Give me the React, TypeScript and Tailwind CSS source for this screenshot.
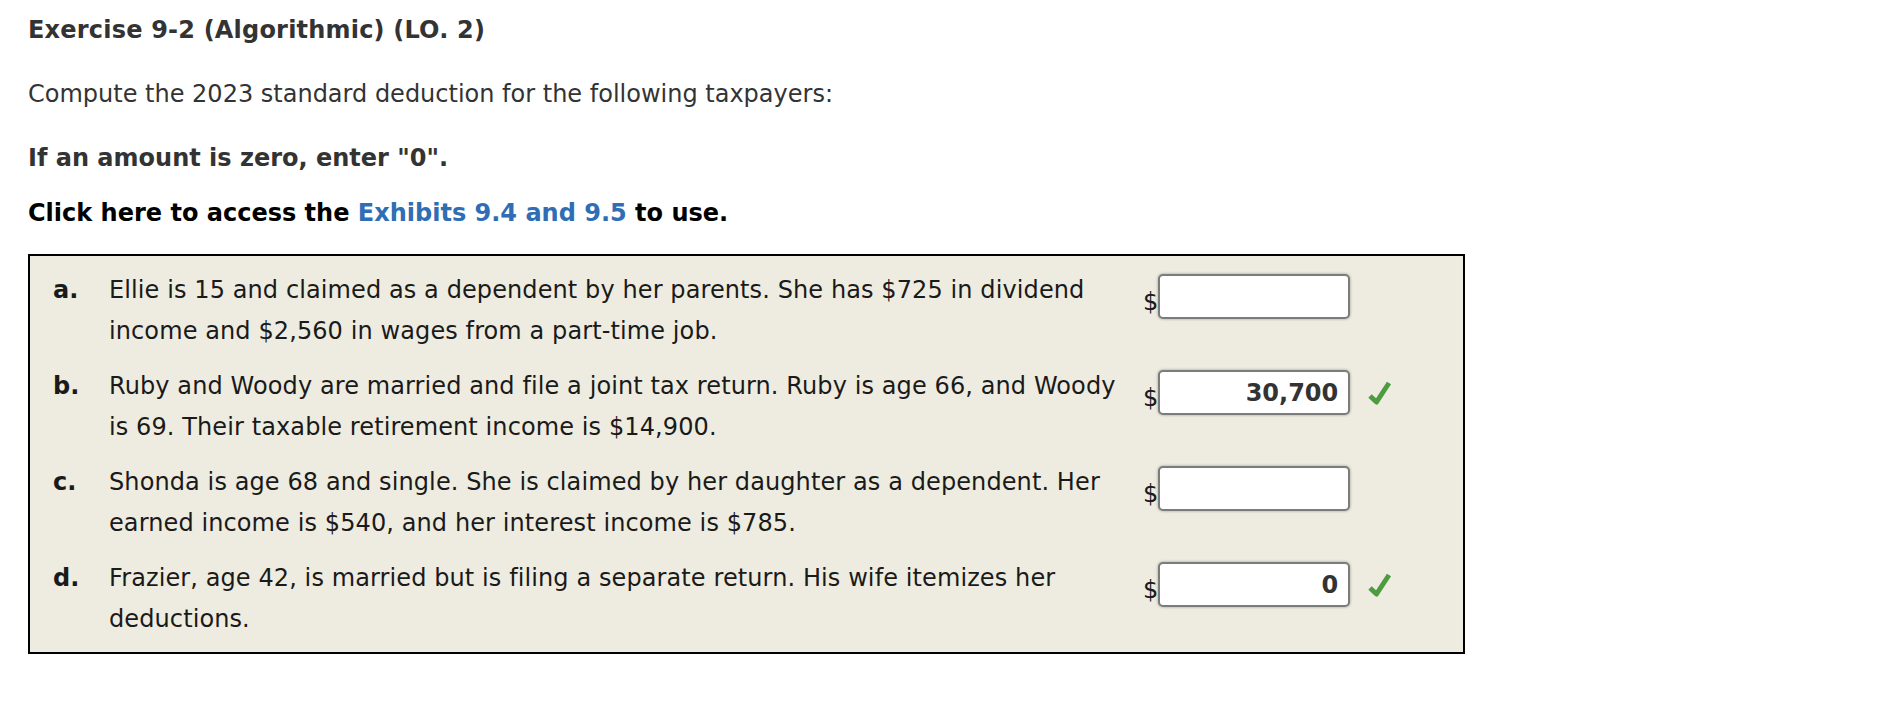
import type { ReactNode } from 'react';

interface Part {
  letter: string;
  text: ReactNode;
  value?: string;
  correct?: boolean;
}

const parts: Part[] = [
  {
    letter: 'a.',
    text: 'Ellie is 15 and claimed as a dependent by her parents. She has $725 in dividend income and $2,560 in wages from a part-time job.',
  },
  {
    letter: 'b.',
    text: 'Ruby and Woody are married and file a joint tax return. Ruby is age 66, and Woody is 69. Their taxable retirement income is $14,900.',
    value: '30,700',
    correct: true,
  },
  {
    letter: 'c.',
    text: 'Shonda is age 68 and single. She is claimed by her daughter as a dependent. Her earned income is $540, and her interest income is $785.',
  },
  {
    letter: 'd.',
    text: 'Frazier, age 42, is married but is filing a separate return. His wife itemizes her deductions.',
    value: '0',
    correct: true,
  },
];

function Check() {
  return (
    <svg width="25" height="25" viewBox="0 0 25 25" className="shrink-0">
      <path
        d="M3 16 L9.5 22 L22 3"
        fill="none"
        stroke="#4f9b40"
        strokeWidth="5"
        strokeLinecap="butt"
        strokeLinejoin="round"
      />
    </svg>
  );
}

function PartRow({ part }: { part: Part }) {
  return (
    <div className="flex items-start">
      <div className="w-[56px] shrink-0 font-bold leading-[41px]">{part.letter}</div>
      <div className="mr-[26px] w-[1008px] shrink-0 leading-[41px] tracking-[0.1px]">{part.text}</div>
      <div className="flex items-center pt-[4px]">
        <div className="flex items-end">
          <span className="mb-[5px] leading-[24px]">$</span>
          <div className="flex h-[45px] w-[192px] items-center justify-end rounded-[5px] border-2 border-[#7c7c7c] bg-white pr-[10px] font-bold text-[#333] shadow-[0_0_3px_rgba(0,0,0,0.35)]">
            {part.value}
          </div>
        </div>
        {part.correct && (
          <div className="ml-[17px]">
            <Check />
          </div>
        )}
      </div>
    </div>
  );
}

export default function App() {
  return (
    <div
      className="min-h-[706px] bg-white pl-[28px] pt-[16px] text-[24px] text-[#333]"
      style={{ fontFamily: '"DejaVu Sans", Verdana, sans-serif' }}
    >
      <h1 className="font-bold leading-[28px] tracking-[0.2px]">Exercise 9-2 (Algorithmic) (LO. 2)</h1>
      <p className="mt-[36px] leading-[28px]">
        Compute the 2023 standard deduction for the following taxpayers:
      </p>
      <p className="mt-[36px] font-bold leading-[28px]">If an amount is zero, enter "0".</p>
      <p className="mt-[27px] font-bold leading-[28px] text-black">
        Click here to access the <span className="text-[#2f6db5]">Exhibits 9.4 and 9.5</span> to use.
      </p>
      <div className="mt-[27px] w-[1437px] border-2 border-black bg-[#eeece0] pb-[12px] pl-[23px] pt-[14px] text-[#1a1a1a]">
        <div className="flex flex-col gap-[14px]">
          {parts.map((part) => (
            <PartRow key={part.letter} part={part} />
          ))}
        </div>
      </div>
    </div>
  );
}
